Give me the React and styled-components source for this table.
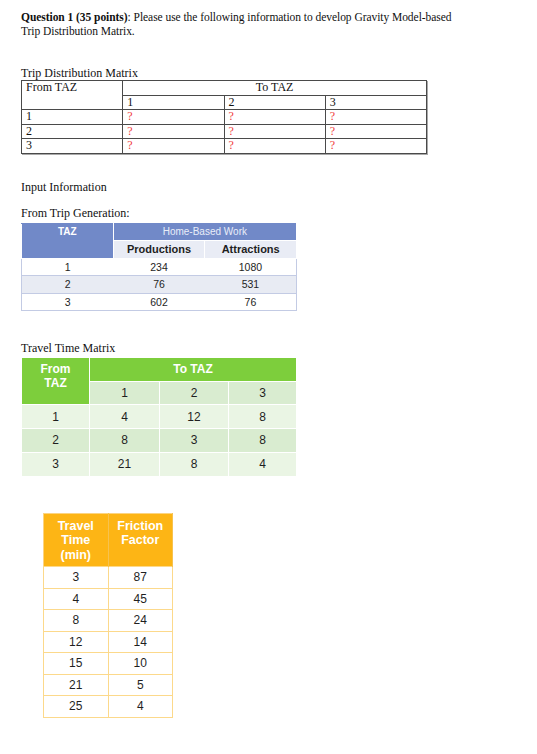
import React from "react";
import styled, { createGlobalStyle } from "styled-components";

const Global = createGlobalStyle`
  html, body { margin: 0; padding: 0; background: #fff; }
`;

const Page = styled.div`
  padding: 10px 0 30px 21px;
  font-family: "Liberation Serif", "Times New Roman", serif;
  font-size: 12px;
  line-height: 14px;
  color: #111;
`;

const Title = styled.p`
  margin: 0;
  white-space: nowrap;
  font-size: 11.5px;
  letter-spacing: -0.05px;
`;

const Caption = styled.div`
  margin-top: ${(p) => p.$mt || 0}px;
  white-space: nowrap;
`;

/* Trip distribution matrix */
const TripTable = styled.table`
  border-collapse: collapse;
  table-layout: fixed;
  width: 406px;
  box-shadow: 1px 1px 0 #a9a9a9;
  font-size: 12px;
`;

const TripCell = styled.td`
  border: 1px solid #4a4a4a;
  padding: 0 4px;
  height: 13.5px;
  line-height: 13.5px;
  vertical-align: top;
  text-align: ${(p) => (p.$center ? "center" : "left")};
  color: ${(p) => (p.$q ? "#f03c3c" : "#111")};
`;

/* Trip generation table */
const GenTable = styled.table`
  border-collapse: collapse;
  table-layout: fixed;
  width: 276px;
  margin-top: 3px;
  font-family: "Liberation Sans", Arial, sans-serif;
  border: 1px solid #c3cbe4;
`;

const GenHead = styled.th`
  background: #7189c8;
  color: ${(p) => (p.$light ? "#e9edf8" : "#fff")};
  font-weight: ${(p) => (p.$light ? "normal" : "bold")};
  font-size: 10px;
  height: 16.5px;
  padding: 0;
  line-height: 16.5px;
  vertical-align: top;
  border: 1px solid #fff;
  border-top-color: #7189c8;
`;

const GenSub = styled.th`
  background: #e9ecf5;
  color: #1e1e1e;
  font-weight: bold;
  font-size: 11px;
  height: 16.5px;
  padding: 0;
  line-height: 16.5px;
  border: 1px solid #fff;
`;

const GenCell = styled.td`
  background: ${(p) => (p.$shade ? "#e8ebf3" : "#fff")};
  color: #1e1e1e;
  font-size: 10.5px;
  text-align: center;
  height: 16.5px;
  padding: 0;
  line-height: 16.5px;
  border-top: 1px solid #c3cbe4;
  border-bottom: 1px solid #c3cbe4;
`;

/* Travel time matrix */
const TTTable = styled.table`
  border-collapse: collapse;
  table-layout: fixed;
  width: 275px;
  margin-top: 2px;
  font-family: "Liberation Sans", Arial, sans-serif;
  font-size: 12px;
`;

const TTHead = styled.th`
  background: #7dce3c;
  color: #fff;
  font-weight: bold;
  font-size: 12px;
  line-height: 14px;
  padding: 4px 0 0;
  height: 18.5px;
  vertical-align: top;
  border: 1px solid #fff;
`;

const TTCell = styled.td`
  background: ${(p) => (p.$shade ? "#d9ecd0" : "#eaf5e4")};
  color: #1f1f1f;
  text-align: center;
  height: 22.8px;
  padding: 0;
  border: 1px solid #fff;
`;

/* Friction factor table */
const FFTable = styled.table`
  border-collapse: collapse;
  table-layout: fixed;
  width: 130px;
  margin: 36px 0 0 22px;
  font-family: "Liberation Sans", Arial, sans-serif;
  font-size: 12px;
  border: 1px solid #fcd481;
`;

const FFHead = styled.th`
  background: #fdb515;
  color: #fff;
  font-weight: bold;
  font-size: 12.5px;
  line-height: 14.5px;
  padding: 5px 0 4px;
  vertical-align: top;
  border-right: 1px solid #f7c24e;
`;

const FFCell = styled.td`
  color: #1f1f1f;
  text-align: center;
  height: 20.5px;
  padding: 0;
  border: 1px solid #fcd98b;
`;

const gen = [
  ["1", "234", "1080"],
  ["2", "76", "531"],
  ["3", "602", "76"],
];

const tt = [
  ["1", "4", "12", "8"],
  ["2", "8", "3", "8"],
  ["3", "21", "8", "4"],
];

const ff = [
  ["3", "87"],
  ["4", "45"],
  ["8", "24"],
  ["12", "14"],
  ["15", "10"],
  ["21", "5"],
  ["25", "4"],
];

export default function App() {
  return (
    <>
      <Global />
      <Page>
        <Title>
          <b>Question 1 (35 points)</b>: Please use the following information to develop Gravity Model-based
          <br />
          Trip Distribution Matrix.
        </Title>

        <Caption $mt={28}>Trip Distribution Matrix</Caption>
        <TripTable>
          <tbody>
            <tr>
              <TripCell rowSpan={2}>From TAZ</TripCell>
              <TripCell colSpan={3} $center>
                To TAZ
              </TripCell>
            </tr>
            <tr>
              <TripCell>1</TripCell>
              <TripCell>2</TripCell>
              <TripCell>3</TripCell>
            </tr>
            {["1", "2", "3"].map((r) => (
              <tr key={r}>
                <TripCell>{r}</TripCell>
                <TripCell $q>?</TripCell>
                <TripCell $q>?</TripCell>
                <TripCell $q>?</TripCell>
              </tr>
            ))}
          </tbody>
        </TripTable>

        <Caption $mt={26}>Input Information</Caption>
        <Caption $mt={12}>From Trip Generation:</Caption>
        <GenTable>
          <tbody>
            <tr>
              <GenHead rowSpan={2}>TAZ</GenHead>
              <GenHead colSpan={2} $light>
                Home-Based Work
              </GenHead>
            </tr>
            <tr>
              <GenSub>Productions</GenSub>
              <GenSub>Attractions</GenSub>
            </tr>
            {gen.map((row, i) => (
              <tr key={row[0]}>
                {row.map((v, j) => (
                  <GenCell key={j} $shade={i === 1}>
                    {v}
                  </GenCell>
                ))}
              </tr>
            ))}
          </tbody>
        </GenTable>

        <Caption $mt={30}>Travel Time Matrix</Caption>
        <TTTable>
          <colgroup>
            <col style={{ width: 68 }} />
            <col style={{ width: 70 }} />
            <col style={{ width: 69 }} />
            <col style={{ width: 68 }} />
          </colgroup>
          <tbody>
            <tr>
              <TTHead rowSpan={2}>
                From
                <br />
                TAZ
              </TTHead>
              <TTHead colSpan={3}>To TAZ</TTHead>
            </tr>
            <tr>
              <TTCell $shade>1</TTCell>
              <TTCell $shade>2</TTCell>
              <TTCell $shade>3</TTCell>
            </tr>
            {tt.map((row, i) => (
              <tr key={row[0]}>
                {row.map((v, j) => (
                  <TTCell key={j} $shade={i === 1}>
                    {v}
                  </TTCell>
                ))}
              </tr>
            ))}
          </tbody>
        </TTTable>

        <FFTable>
          <tbody>
            <tr>
              <FFHead>
                Travel
                <br />
                Time
                <br />
                (min)
              </FFHead>
              <FFHead>
                Friction
                <br />
                Factor
              </FFHead>
            </tr>
            {ff.map((row) => (
              <tr key={row[0]}>
                <FFCell>{row[0]}</FFCell>
                <FFCell>{row[1]}</FFCell>
              </tr>
            ))}
          </tbody>
        </FFTable>
      </Page>
    </>
  );
}
